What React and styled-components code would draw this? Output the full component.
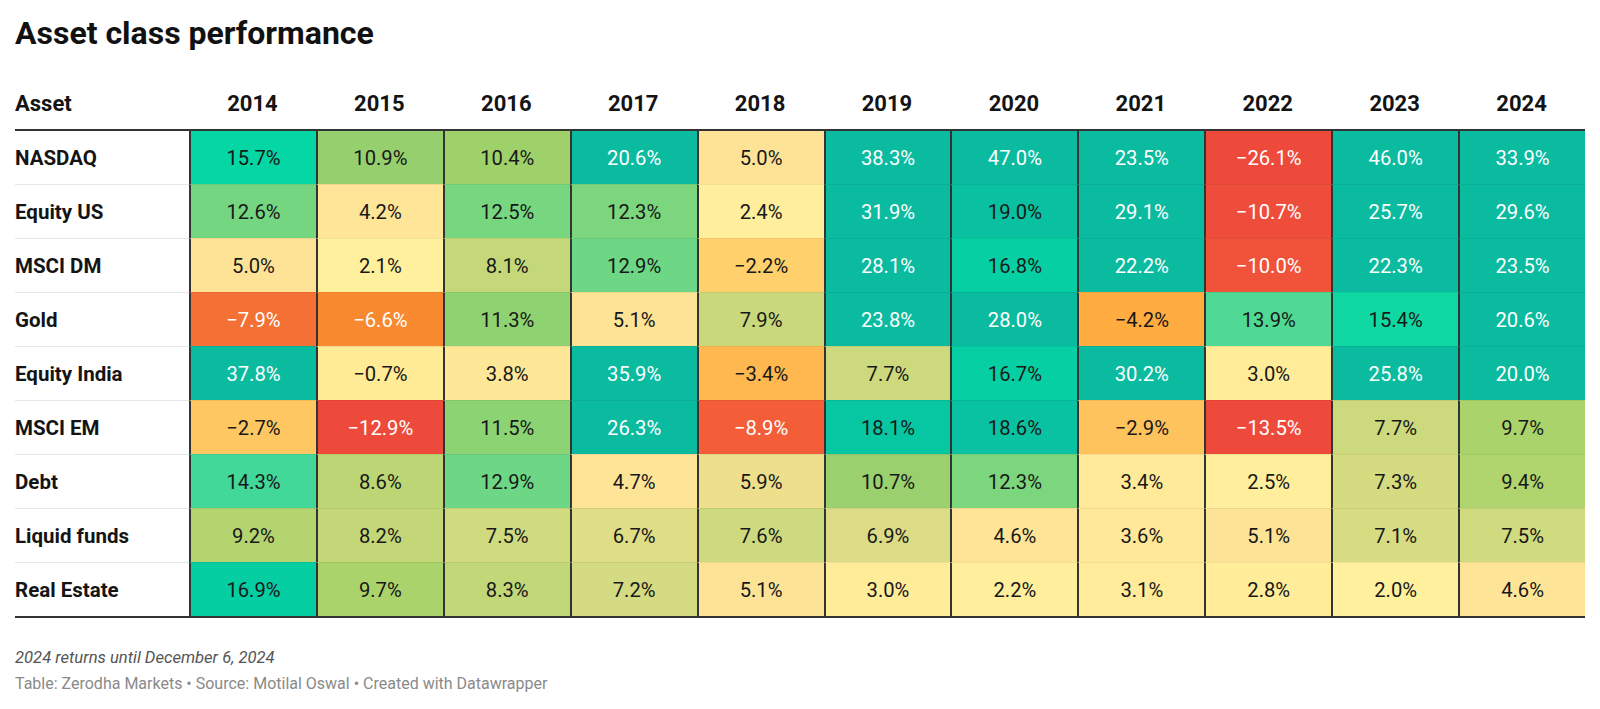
import React from "react";
import styled, { createGlobalStyle } from "styled-components";

const GlobalStyle = createGlobalStyle`
  html, body { margin: 0; padding: 0; background: #ffffff; }
  body { font-family: Roboto, "Liberation Sans", Arial, sans-serif; color: #181818; }
`;

const YEARS = [2014, 2015, 2016, 2017, 2018, 2019, 2020, 2021, 2022, 2023, 2024];

const ROWS = [
  ["NASDAQ", [15.7, 10.9, 10.4, 20.6, 5.0, 38.3, 47.0, 23.5, -26.1, 46.0, 33.9]],
  ["Equity US", [12.6, 4.2, 12.5, 12.3, 2.4, 31.9, 19.0, 29.1, -10.7, 25.7, 29.6]],
  ["MSCI DM", [5.0, 2.1, 8.1, 12.9, -2.2, 28.1, 16.8, 22.2, -10.0, 22.3, 23.5]],
  ["Gold", [-7.9, -6.6, 11.3, 5.1, 7.9, 23.8, 28.0, -4.2, 13.9, 15.4, 20.6]],
  ["Equity India", [37.8, -0.7, 3.8, 35.9, -3.4, 7.7, 16.7, 30.2, 3.0, 25.8, 20.0]],
  ["MSCI EM", [-2.7, -12.9, 11.5, 26.3, -8.9, 18.1, 18.6, -2.9, -13.5, 7.7, 9.7]],
  ["Debt", [14.3, 8.6, 12.9, 4.7, 5.9, 10.7, 12.3, 3.4, 2.5, 7.3, 9.4]],
  ["Liquid funds", [9.2, 8.2, 7.5, 6.7, 7.6, 6.9, 4.6, 3.6, 5.1, 7.1, 7.5]],
  ["Real Estate", [16.9, 9.7, 8.3, 7.2, 5.1, 3.0, 2.2, 3.1, 2.8, 2.0, 4.6]],
];

const STOPS = [
  [-11, "#ee4a3c"],
  [-9, "#f35b38"],
  [-7.9, "#f47035"],
  [-6.6, "#f8892f"],
  [-4.2, "#ffad41"],
  [-3.4, "#ffb84f"],
  [-2.7, "#ffc762"],
  [-2.2, "#ffd06b"],
  [-0.7, "#ffea95"],
  [2.0, "#fff09d"],
  [3.0, "#ffec99"],
  [4.0, "#ffe698"],
  [5.0, "#fee397"],
  [5.9, "#eedf8d"],
  [7.0, "#d9dc84"],
  [8.0, "#c7d87a"],
  [9.0, "#b6d571"],
  [10.0, "#a6d269"],
  [10.9, "#96d06e"],
  [12.0, "#84d578"],
  [12.9, "#6dd786"],
  [14.0, "#4dd896"],
  [15.0, "#28d89f"],
  [15.6, "#04d8a4"],
  [16.8, "#06cfa3"],
  [18.6, "#08c2a1"],
  [20, "#0abb9f"],
];

const hex = (h) => [1, 3, 5].map((i) => parseInt(h.slice(i, i + 2), 16));

function colorFor(v) {
  if (v <= STOPS[0][0]) return STOPS[0][1];
  const last = STOPS[STOPS.length - 1];
  if (v >= last[0]) return last[1];
  for (let i = 0; i < STOPS.length - 1; i++) {
    const [a, ca] = STOPS[i];
    const [b, cb] = STOPS[i + 1];
    if (v >= a && v <= b) {
      const t = (v - a) / (b - a);
      const A = hex(ca);
      const B = hex(cb);
      const c = A.map((x, k) => Math.round(x + (B[k] - x) * t));
      return `rgb(${c[0]}, ${c[1]}, ${c[2]})`;
    }
  }
  return last[1];
}

const fmt = (v) => (v < 0 ? "\u2212" + Math.abs(v).toFixed(1) : v.toFixed(1)) + "%";

const Page = styled.div`
  padding: 15px 15px 0;
  width: 1570px;
`;

const Title = styled.h1`
  margin: 0;
  font-size: 32px;
  line-height: 36px;
  font-weight: 700;
  color: #111111;
`;

const Table = styled.div`
  margin-top: 30px;
  border-bottom: 2px solid #333333;
`;

const Row = styled.div`
  display: grid;
  grid-template-columns: 174px repeat(11, 1fr);
  height: ${(p) => (p.$head ? "auto" : p.$first ? "53px" : "54px")};
  ${(p) => p.$head && "border-bottom: 2px solid #333333;"}
`;

const HeadCell = styled.div`
  padding: 11px 0 13px;
  font-size: 22px;
  line-height: 24px;
  font-weight: 700;
  color: #141414;
  text-align: ${(p) => (p.$left ? "left" : "center")};
`;

const LabelCell = styled.div`
  display: flex;
  align-items: center;
  font-size: 20.5px;
  font-weight: 700;
  color: #141414;
  border-top: ${(p) => (p.$first ? "none" : "1px solid #e6e6e6")};
`;

const DataCell = styled.div`
  display: flex;
  align-items: center;
  justify-content: center;
  font-size: 20.2px;
  font-weight: 400;
  background: ${(p) => p.$bg};
  color: ${(p) => (p.$light ? "#ffffff" : "#181818")};
  border-left: 2px solid #333333;
  border-top: ${(p) => (p.$first ? "none" : "1px solid rgba(0, 0, 0, 0.06)")};
`;

const Notes = styled.div`
  margin-top: 29px;
  display: flex;
  flex-direction: column;
  gap: 6px;
`;

const Note = styled.div`
  font-size: 16.6px;
  line-height: 21px;
  font-style: italic;
  color: #555555;
`;

const Source = styled.div`
  font-size: 16px;
  line-height: 20px;
  color: #8a8a8a;
`;

export default function App() {
  return (
    <>
      <GlobalStyle />
      <Page>
        <Title>Asset class performance</Title>
        <Table>
          <Row $head>
            <HeadCell $left>Asset</HeadCell>
            {YEARS.map((y) => (
              <HeadCell key={y}>{y}</HeadCell>
            ))}
          </Row>
          {ROWS.map(([name, vals], ri) => (
            <Row key={name} $first={ri === 0}>
              <LabelCell $first={ri === 0}>{name}</LabelCell>
              {vals.map((v, ci) => (
                <DataCell
                  key={ci}
                  $first={ri === 0}
                  $bg={colorFor(v)}
                  $light={v >= 20 || v <= -6}
                >
                  {fmt(v)}
                </DataCell>
              ))}
            </Row>
          ))}
        </Table>
        <Notes>
          <Note>2024 returns until December 6, 2024</Note>
          <Source>Table: Zerodha Markets • Source: Motilal Oswal • Created with Datawrapper</Source>
        </Notes>
      </Page>
    </>
  );
}
